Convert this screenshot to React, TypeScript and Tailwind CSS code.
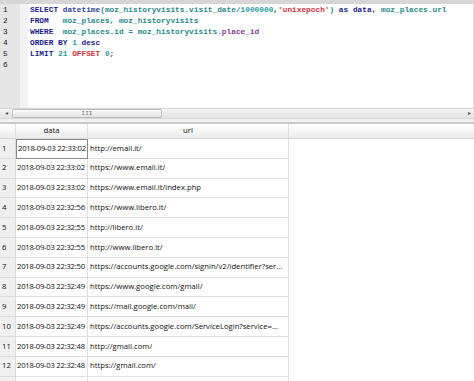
import React from 'react';

type Tok = [string, string];

// syntax colours of the sql editor
const KW = 'text-[#1c1c8c]';
const FN = 'text-[#2a3f9a]';
const ID = 'text-[#2a8a8a]';
const STR = 'text-[#d0303a]';
const NUM = 'text-[#2aa0a0]';
const PL = 'text-[#333333]';
const PU = 'text-[#8a3a9a]';

const code: Tok[][] = [
  [
    ['SELECT ', KW],
    ['datetime', FN],
    ['(moz_historyvisits.visit_date/', ID],
    ['1000000', NUM],
    [',', PL],
    ["'unixepoch'", STR],
    [') ', ID],
    ['as data', KW],
    [', ', PL],
    ['moz_places.url', ID],
  ],
  [
    ['FROM   ', KW],
    ['moz_places, moz_historyvisits', ID],
  ],
  [
    ['WHERE  ', KW],
    ['moz_places.id = moz_historyvisits.', ID],
    ['place_id', PU],
  ],
  [
    ['ORDER BY ', KW],
    ['1 ', NUM],
    ['desc', KW],
  ],
  [
    ['LIMIT ', KW],
    ['21 ', NUM],
    ['OFFSET ', STR],
    ['0', NUM],
    [';', PL],
  ],
  [],
];

const rows: [string, string][] = [
  ['2018-09-03 22:33:02', 'http://email.it/'],
  ['2018-09-03 22:33:02', 'https://www.email.it/'],
  ['2018-09-03 22:33:02', 'https://www.email.it/index.php'],
  ['2018-09-03 22:32:56', 'https://www.libero.it/'],
  ['2018-09-03 22:32:55', 'http://libero.it/'],
  ['2018-09-03 22:32:55', 'http://www.libero.it/'],
  ['2018-09-03 22:32:50', 'https://accounts.google.com/signin/v2/identifier?ser...'],
  ['2018-09-03 22:32:49', 'https://www.google.com/gmail/'],
  ['2018-09-03 22:32:49', 'https://mail.google.com/mail/'],
  ['2018-09-03 22:32:49', 'https://accounts.google.com/ServiceLogin?service=...'],
  ['2018-09-03 22:32:48', 'http://gmail.com/'],
  ['2018-09-03 22:32:48', 'https://gmail.com/'],
  ['', ''],
];

const mono = { fontFamily: '"Liberation Mono", "Courier New", monospace' };
const ui = { fontFamily: '"Open Sans", "Noto Sans", sans-serif' };

export default function App() {
  return (
    <div className="w-[474px] h-[381px] overflow-hidden bg-white flex flex-col">
      {/* editor */}
      <div className="h-[108px] flex flex-col shrink-0 border-r border-[#dcdcdc]">
        <div className="h-[4px] bg-[#d6d6d6] shrink-0" />
        <div className="flex flex-1 text-[7.8px] leading-[11px]" style={mono}>
          <div className="w-[20px] bg-[#e6e6e6] pt-[1px] pl-[3px] text-[#222]">
            {code.map((_, i) => (
              <div key={i}>{i + 1}</div>
            ))}
          </div>
          <div className="w-[8px] bg-[#f3f3f3]" />
          <div className="flex-1 pt-[1px] pl-[2px] font-bold">
            {code.map((line, i) => (
              <div key={i} className="whitespace-pre h-[11px]">
                {line.map(([t, c], j) => (
                  <span key={j} className={c}>
                    {t}
                  </span>
                ))}
              </div>
            ))}
          </div>
        </div>
      </div>

      {/* horizontal scrollbar */}
      <div className="h-[11px] shrink-0 flex items-center bg-gradient-to-b from-[#f4f4f4] to-[#e2e2e2] border-y border-[#d8d8d8]">
        <div className="w-[12px] flex justify-center text-[6px] text-[#555]">◂</div>
        <div className="w-[150px] h-[9px] rounded-[2px] border border-[#bdbdbd] bg-gradient-to-b from-[#fafafa] to-[#e4e4e4] flex items-center justify-center">
          <span className="text-[6px] leading-none text-[#777]" style={mono}>III</span>
        </div>
        <div className="flex-1" />
        <div className="w-[10px] flex justify-center text-[6px] text-[#555]">▸</div>
      </div>

      {/* splitter */}
      <div className="h-[5px] shrink-0 bg-[#f0f0f0] border-b-2 border-[#c8c8c8]" />

      {/* result grid */}
      <div className="flex-1 text-[7.7px] text-[#111]" style={ui}>
        <div className="grid grid-cols-[16px_72px_201px_1fr] h-[15px] bg-gradient-to-b from-[#ffffff] to-[#ececec] border-b border-[#d8d8d8]">
          <div className="border-r border-[#e0e0e0]" />
          <div className="flex items-center justify-center border-r border-[#e0e0e0]">data</div>
          <div className="flex items-center justify-center border-r border-[#e0e0e0]">url</div>
          <div />
        </div>
        {rows.map(([d, u], i) => (
          <div key={i} className="grid grid-cols-[16px_72px_201px_1fr] h-[19.8px]">
            <div className="bg-[#f0f0f0] border-b border-r border-[#dcdcdc] flex items-center pl-[2px]">
              {i < 12 ? i + 1 : ''}
            </div>
            <div
              className={`flex items-center pl-[1px] whitespace-nowrap overflow-hidden tracking-[-0.25px] border-b border-r ${
                i === 0 ? 'border border-[#8a8a8a]' : 'border-[#e0e0e0]'
              }`}
            >
              {d}
            </div>
            <div className="flex items-center pl-[2px] whitespace-nowrap overflow-hidden border-b border-r border-[#e0e0e0]">
              <span className="truncate">{u}</span>
            </div>
            <div />
          </div>
        ))}
      </div>
    </div>
  );
}
